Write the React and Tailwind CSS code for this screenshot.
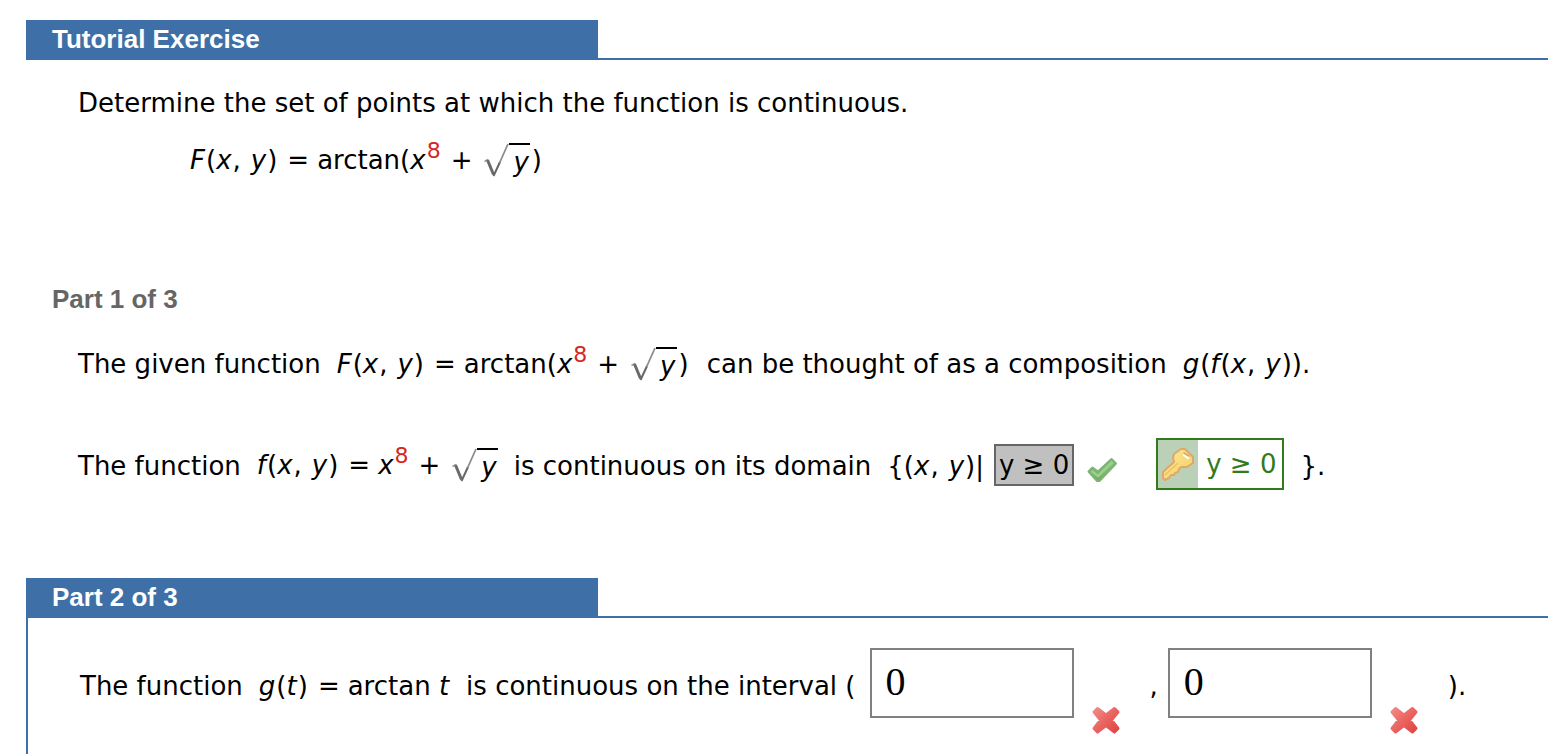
import { useState } from 'react';

// Root sign followed by its overlined radicand
const Sqrt = ({ children }) => (
  <span className="ml-0.5 inline-flex h-[34px] items-start">
    <svg className="h-[34px] w-[25px]" viewBox="0 0 25 34" fill="none">
      <path d="M0.500 18.500L4 16.500" stroke="#999" strokeWidth="1.500" />
      <path d="M3.500 17L9.500 31.500" stroke="#6a6a6a" strokeWidth="3" />
      <path d="M9.500 33L16 19" stroke="#666" strokeWidth="2" />
      <path d="M15.500 20L24 1" stroke="#8c8c8c" strokeWidth="1.800" />
    </svg>
    <span className="border-t-2 border-black pl-1 leading-[34px]">{children}</span>
  </span>
);

const Var = ({ children }) => <i className="mr-px">{children}</i>;

const Equals = () => <span className="mr-2 ml-2.5">=</span>;

const Plus = () => <span className="mx-2.5">+</span>;

// (x, y)
const Args = () => (
  <span>
    (<Var>x</Var>,<span className="ml-2.5"><Var>y</Var></span>)
  </span>
);

// x^8 + sqrt(y)
const RootSum = () => (
  <>
    <span>
      <Var>x</Var>
      <sup className="text-[22px] text-[#d4281c]">8</sup>
    </span>
    <Plus />
    <Sqrt>
      <Var>y</Var>
    </Sqrt>
  </>
);

// F(x, y) = arctan(x^8 + sqrt(y))
const ArctanFormula = () => (
  <span className="mr-0.5 flex items-center">
    <Var>F</Var>
    <Args />
    <Equals />
    <span>arctan(</span>
    <RootSum />
    <span className="ml-0.5">)</span>
  </span>
);

const CheckIcon = () => (
  <svg className="h-8 w-8" viewBox="0 0 32 32" role="img" aria-label="Correct">
    <defs>
      <linearGradient id="check" x1="0" y1="0" x2="0" y2="1">
        <stop offset="0" stopColor="#8fc283" />
        <stop offset="1" stopColor="#6fae66" />
      </linearGradient>
    </defs>
    <path
      d="M2.500 17.500L6.500 13.500L12 17.500L25.500 5L30 9.500L13.500 27L11 27Z"
      fill="url(#check)"
      stroke="#7db373"
      strokeWidth="2"
      strokeLinejoin="round"
    />
    <path d="M5.500 17L12 22L26.500 8" stroke="#9ad18c" strokeWidth="2.500" fill="none" strokeLinejoin="round" />
  </svg>
);

const CrossIcon = () => (
  <svg className="h-8 w-8" viewBox="0 0 32 32" role="img" aria-label="Incorrect">
    <defs>
      <linearGradient id="cross" x1="0" y1="0" x2="1" y2="1">
        <stop offset="0" stopColor="#f18a86" />
        <stop offset="0.500" stopColor="#ea6460" />
        <stop offset="1" stopColor="#df4440" />
      </linearGradient>
    </defs>
    <path
      d="M7.500 4.500L16 11L24.500 4.500L28 8L21.500 16L28 24.500L24.500 28L16 21.500L7.500 28L4 24.500L10.500 16L4 8Z"
      fill="url(#cross)"
      stroke="url(#cross)"
      strokeWidth="3"
      strokeLinejoin="round"
    />
  </svg>
);

const KeyIcon = () => (
  <svg className="h-9 w-9" viewBox="0 0 36 36" role="img" aria-label="Answer key">
    <defs>
      <linearGradient id="key" x1="0" y1="0" x2="1" y2="1">
        <stop offset="0" stopColor="#fbe89c" />
        <stop offset="1" stopColor="#f5cf62" />
      </linearGradient>
    </defs>
    <path
      d="M14 8L21 3L25 3L33 11L33 17L27 21L21 21L19 23L18 26L15 27L14 29L11 29L9 32L5 34L3 32L3 26L14 16L13 12Z"
      fill="url(#key)"
      stroke="#e0a868"
      strokeWidth="2"
      strokeLinejoin="round"
    />
    <path d="M5 29L18 17" stroke="#ecc05c" strokeWidth="1.500" />
    <path d="M24 9L28 12" stroke="#fffdf0" strokeWidth="2.500" strokeLinecap="round" />
    <path d="M24 7L29 10" stroke="#dba75c" strokeWidth="1.500" strokeLinecap="round" />
  </svg>
);

const SectionHeader = ({ title }) => (
  <header className="border-b-2 border-[#3e6fa7]">
    <h2 className="h-[38px] w-[572px] bg-[#3e6fa7] pl-[26px] font-['Liberation_Sans',Arial,sans-serif] text-[26px] leading-[38px] font-bold text-white">
      {title}
    </h2>
  </header>
);

const AnswerBox = ({ label }) => {
  const [value, setValue] = useState('0');

  return (
    <span className="flex h-[70px] items-start">
      <input
        type="text"
        aria-label={label}
        value={value}
        onChange={(e) => setValue(e.target.value)}
        className="h-[70px] w-[204px] border-2 border-[#808080] bg-white pr-3 pb-1 pl-3.5 font-['Liberation_Serif','Times_New_Roman',serif] text-[40px] outline-none"
      />
      <span className="mt-14 ml-4">
        <CrossIcon />
      </span>
    </span>
  );
};

export default function App() {
  return (
    <main className="flex min-h-screen flex-col bg-white pt-5 pl-[26px] font-['DejaVu_Sans',Verdana,sans-serif] text-[26px] leading-8 whitespace-nowrap text-black">
      <section>
        <SectionHeader title="Tutorial Exercise" />
        <div className="pt-[27px] pl-[52px]">
          <p>Determine the set of points at which the function is continuous.</p>
          <div className="mt-6 ml-28">
            <ArctanFormula />
          </div>
        </div>
      </section>

      <section className="mt-[103px]">
        <h2 className="pl-[26px] font-['Liberation_Sans',Arial,sans-serif] text-[26px] leading-[38px] font-bold text-[#666]">
          Part 1 of 3
        </h2>
        <div className="pt-[29px] pl-[52px]">
          <div className="flex items-center gap-4">
            <span>The given function</span>
            <ArctanFormula />
            <span>can be thought of as a composition</span>
            <span>
              <Var>g</Var>(<Var>f</Var>
              <Args />
              ).
            </span>
          </div>

          <div className="mt-[57px] flex items-end gap-4">
            <span className="mb-2">The function</span>
            <span className="mb-2 flex items-center">
              <Var>f</Var>
              <Args />
              <Equals />
              <RootSum />
            </span>
            <span className="mb-2">is continuous on its domain</span>
            <span className="flex items-end">
              <span className="mb-2">
                {'{'}
                <Args />|
              </span>
              <span className="mb-1 ml-2.5 border-2 border-[#666] bg-[#c0c0c0] px-[3px] leading-[38px]">y ≥ 0</span>
              <span className="mb-1 ml-3">
                <CheckIcon />
              </span>
            </span>
            <span className="ml-[22px] flex h-[52px] items-center border-2 border-[#327a1c] text-[#327a1c]">
              <span className="flex h-12 w-10 items-center justify-center bg-[#bad1b8]">
                <KeyIcon />
              </span>
              <span className="pr-1.5 pl-2">y ≥ 0</span>
            </span>
            <span className="mb-2">{'}'}.</span>
          </div>
        </div>
      </section>

      <section className="mt-[88px] flex flex-1 flex-col">
        <SectionHeader title="Part 2 of 3" />
        <div className="flex-1 border-l-2 border-[#3e6fa7] pt-[30px] pl-[52px]">
          <div className="flex items-end">
            <span className="mb-4 flex items-center gap-4">
              <span>The function</span>
              <span>
                <Var>g</Var>(<Var>t</Var>)<Equals />
                arctan <Var>t</Var>
              </span>
              <span>is continuous on the interval (</span>
            </span>
            <span className="ml-3.5">
              <AnswerBox label="Left endpoint" />
            </span>
            <span className="mb-4 ml-7 pr-2.5">,</span>
            <AnswerBox label="Right endpoint" />
            <span className="mb-4 ml-7">).</span>
          </div>
        </div>
      </section>
    </main>
  );
}
